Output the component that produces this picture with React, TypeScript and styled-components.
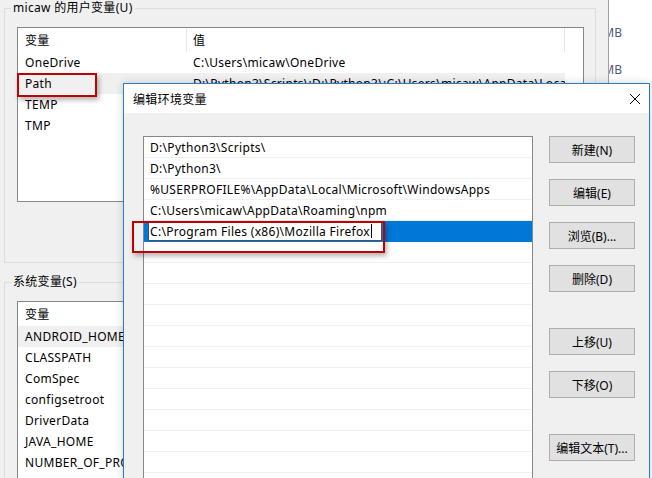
import React from 'react';
import styled, { createGlobalStyle } from 'styled-components';

const GlobalStyle = createGlobalStyle`
  html, body {
    margin: 0;
    padding: 0;
    background: #f0f0f0;
  }
  body {
    font-family: "Noto Sans", "Noto Sans CJK SC", sans-serif;
    font-size: 12px;
    letter-spacing: 0.3px;
    color: #000;
  }
  * {
    box-sizing: border-box;
  }
`;

const Screen = styled.div`
  position: relative;
  width: 652px;
  height: 478px;
  overflow: hidden;
  display: flex;
  background: #f0f0f0;
`;

const MainPane = styled.div`
  width: 608px;
  flex-shrink: 0;
  padding-left: 4px;
  display: flex;
  flex-direction: column;
`;

const GroupBox = styled.fieldset<{ $top: number; $padTop: number; $padBottom: number }>`
  margin: ${p => p.$top}px 0 0 0;
  width: 592px;
  min-width: 0;
  padding: ${p => p.$padTop}px 11px ${p => p.$padBottom}px 6px;
  border: 1px solid #dcdcdc;
`;

const GroupLabel = styled.legend`
  padding: 0 2px;
  line-height: 16px;
  font-size: 12px;
`;

const ListView = styled.div<{ $height: number }>`
  margin-left: 6px;
  width: 567px;
  height: ${p => p.$height}px;
  background: #fff;
  border: 1px solid #828790;
  overflow: hidden;
`;

const HeaderRow = styled.div`
  display: flex;
  height: 24px;
`;

const HeaderCell = styled.div<{ $width: number }>`
  width: ${p => p.$width}px;
  flex-shrink: 0;
  display: flex;
  align-items: center;
  padding-left: 6px;
  border-right: 1px solid #e5e5e5;
  white-space: nowrap;

  &:first-child {
    padding-left: 7px;
  }
`;

const DataRow = styled.div<{ $active?: boolean }>`
  display: flex;
  width: 547px;
  height: 21px;
  background: ${p => (p.$active ? '#f0f0f0' : 'transparent')};
`;

const DataCell = styled.div<{ $width: number }>`
  width: ${p => p.$width}px;
  flex-shrink: 0;
  display: flex;
  align-items: center;
  padding-left: 6px;
  white-space: nowrap;
  overflow: hidden;

  &:first-child {
    padding-left: 7px;
    margin-right: 1px;
  }
`;

const SideWindow = styled.div`
  flex: 1;
  background: #fff;
  border-left: 1px solid #a0a0a0;
  overflow: hidden;
`;

const SizeCell = styled.div`
  height: 37px;
  display: flex;
  align-items: center;
  justify-content: flex-end;
  padding-right: 30px;
  color: #4e5b7a;
  white-space: nowrap;
  letter-spacing: 0;

  &:first-child {
    margin-top: -23px;
  }
`;

const Dialog = styled.div`
  position: absolute;
  left: 123px;
  top: 83px;
  width: 527px;
  height: 420px;
  border: 1px solid #2b7bcb;
  background: #f0f0f0;
  display: flex;
  flex-direction: column;
  box-shadow: 0 0 8px rgba(0, 0, 0, 0.18);
`;

const TitleBar = styled.div`
  height: 29px;
  flex-shrink: 0;
  background: #fff;
  display: flex;
  align-items: center;
  justify-content: space-between;
  padding: 0 9px;
`;

const DialogBody = styled.div`
  flex: 1;
  display: flex;
  gap: 16px;
  padding: 23px 14px 0 19px;
`;

const PathList = styled.div`
  flex: 1;
  height: 400px;
  background: #fff;
  border: 1px solid #828790;
  overflow: hidden;
`;

const PathRow = styled.div<{ $selected?: boolean }>`
  height: 21px;
  display: flex;
  align-items: center;
  padding-left: ${p => (p.$selected ? 4 : 6)}px;
  border-bottom: 1px solid ${p => (p.$selected ? '#0078d7' : '#f0f0f0')};
  background: ${p => (p.$selected ? '#0078d7' : '#fff')};
  white-space: nowrap;
`;

const EditBox = styled.div`
  width: 234px;
  height: 19px;
  background: #fff;
  border: 1px solid #505050;
  padding-left: 1px;
  display: flex;
  align-items: center;
  white-space: nowrap;
`;

const Caret = styled.span`
  display: inline-block;
  width: 1px;
  height: 14px;
  background: #000;
  margin-left: 1px;
`;

const ButtonColumn = styled.div`
  width: 86px;
  flex-shrink: 0;
  display: flex;
  flex-direction: column;
  gap: 16px;
`;

const Button = styled.div<{ $spaced?: boolean }>`
  height: 27px;
  margin-top: ${p => (p.$spaced ? 20 : 0)}px;
  background: #e1e1e1;
  border: 1px solid #adadad;
  display: flex;
  align-items: center;
  justify-content: center;
  white-space: nowrap;
  letter-spacing: 0;
`;

const Highlight = styled.div<{ $x: number; $y: number; $w: number; $h: number }>`
  position: absolute;
  left: ${p => p.$x}px;
  top: ${p => p.$y}px;
  width: ${p => p.$w}px;
  height: ${p => p.$h}px;
  border: 2px solid #c00000;
  box-shadow: 2px 3px 5px rgba(0, 0, 0, 0.3);
`;

const userVars = [
  { name: 'OneDrive', value: 'C:\\Users\\micaw\\OneDrive' },
  {
    name: 'Path',
    value: 'D:\\Python3\\Scripts\\;D:\\Python3\\;C:\\Users\\micaw\\AppData\\Local\\Microsoft\\WindowsApps',
    active: true,
  },
  { name: 'TEMP', value: '%USERPROFILE%\\AppData\\Local\\Temp' },
  { name: 'TMP', value: '%USERPROFILE%\\AppData\\Local\\Temp' },
];

const systemVars = [
  'ANDROID_HOME',
  'CLASSPATH',
  'ComSpec',
  'configsetroot',
  'DriverData',
  'JAVA_HOME',
  'NUMBER_OF_PROCESSORS',
];

const paths = [
  'D:\\Python3\\Scripts\\',
  'D:\\Python3\\',
  '%USERPROFILE%\\AppData\\Local\\Microsoft\\WindowsApps',
  'C:\\Users\\micaw\\AppData\\Roaming\\npm',
];

const CloseIcon = () => (
  <svg width="10" height="10" viewBox="0 0 10 10">
    <path d="M0 0L10 10M10 0L0 10" stroke="#000" strokeWidth="1" fill="none" />
  </svg>
);

export default function App() {
  return (
    <Screen>
      <GlobalStyle />
      <MainPane>
        <GroupBox $top={0} $padTop={11} $padBottom={60}>
          <GroupLabel>micaw 的用户变量(U)</GroupLabel>
          <ListView $height={175}>
            <HeaderRow>
              <HeaderCell $width={169}>变量</HeaderCell>
              <HeaderCell $width={378}>值</HeaderCell>
            </HeaderRow>
            {userVars.map(v => (
              <DataRow key={v.name} $active={v.active}>
                <DataCell $width={168}>{v.name}</DataCell>
                <DataCell $width={378}>{v.value}</DataCell>
              </DataRow>
            ))}
          </ListView>
        </GroupBox>
        <GroupBox $top={11} $padTop={11} $padBottom={0}>
          <GroupLabel>系统变量(S)</GroupLabel>
          <ListView $height={240}>
            <HeaderRow>
              <HeaderCell $width={169}>变量</HeaderCell>
              <HeaderCell $width={378}>值</HeaderCell>
            </HeaderRow>
            {systemVars.map((name, i) => (
              <DataRow key={name} $active={i === 0}>
                <DataCell $width={168}>{name}</DataCell>
                <DataCell $width={378}></DataCell>
              </DataRow>
            ))}
          </ListView>
        </GroupBox>
      </MainPane>
      <SideWindow>
        {['4 MB', '12 MB', '3 MB', '8 MB', '1 MB'].map(s => (
          <SizeCell key={s}>{s}</SizeCell>
        ))}
      </SideWindow>

      <Highlight $x={17} $y={73} $w={80} $h={24} />

      <Dialog>
        <TitleBar>
          <span>编辑环境变量</span>
          <CloseIcon />
        </TitleBar>
        <DialogBody>
          <PathList>
            {paths.map(p => (
              <PathRow key={p}>{p}</PathRow>
            ))}
            <PathRow $selected>
              <EditBox>
                C:\Program Files (x86)\Mozilla Firefox
                <Caret />
              </EditBox>
            </PathRow>
            {Array.from({ length: 14 }).map((_, i) => (
              <PathRow key={`empty-${i}`} />
            ))}
          </PathList>
          <ButtonColumn>
            <Button>新建(N)</Button>
            <Button>编辑(E)</Button>
            <Button>浏览(B)...</Button>
            <Button>删除(D)</Button>
            <Button $spaced>上移(U)</Button>
            <Button>下移(O)</Button>
            <Button $spaced>编辑文本(T)...</Button>
          </ButtonColumn>
        </DialogBody>
      </Dialog>

      <Highlight $x={132} $y={221} $w={253} $h={32} />
    </Screen>
  );
}
